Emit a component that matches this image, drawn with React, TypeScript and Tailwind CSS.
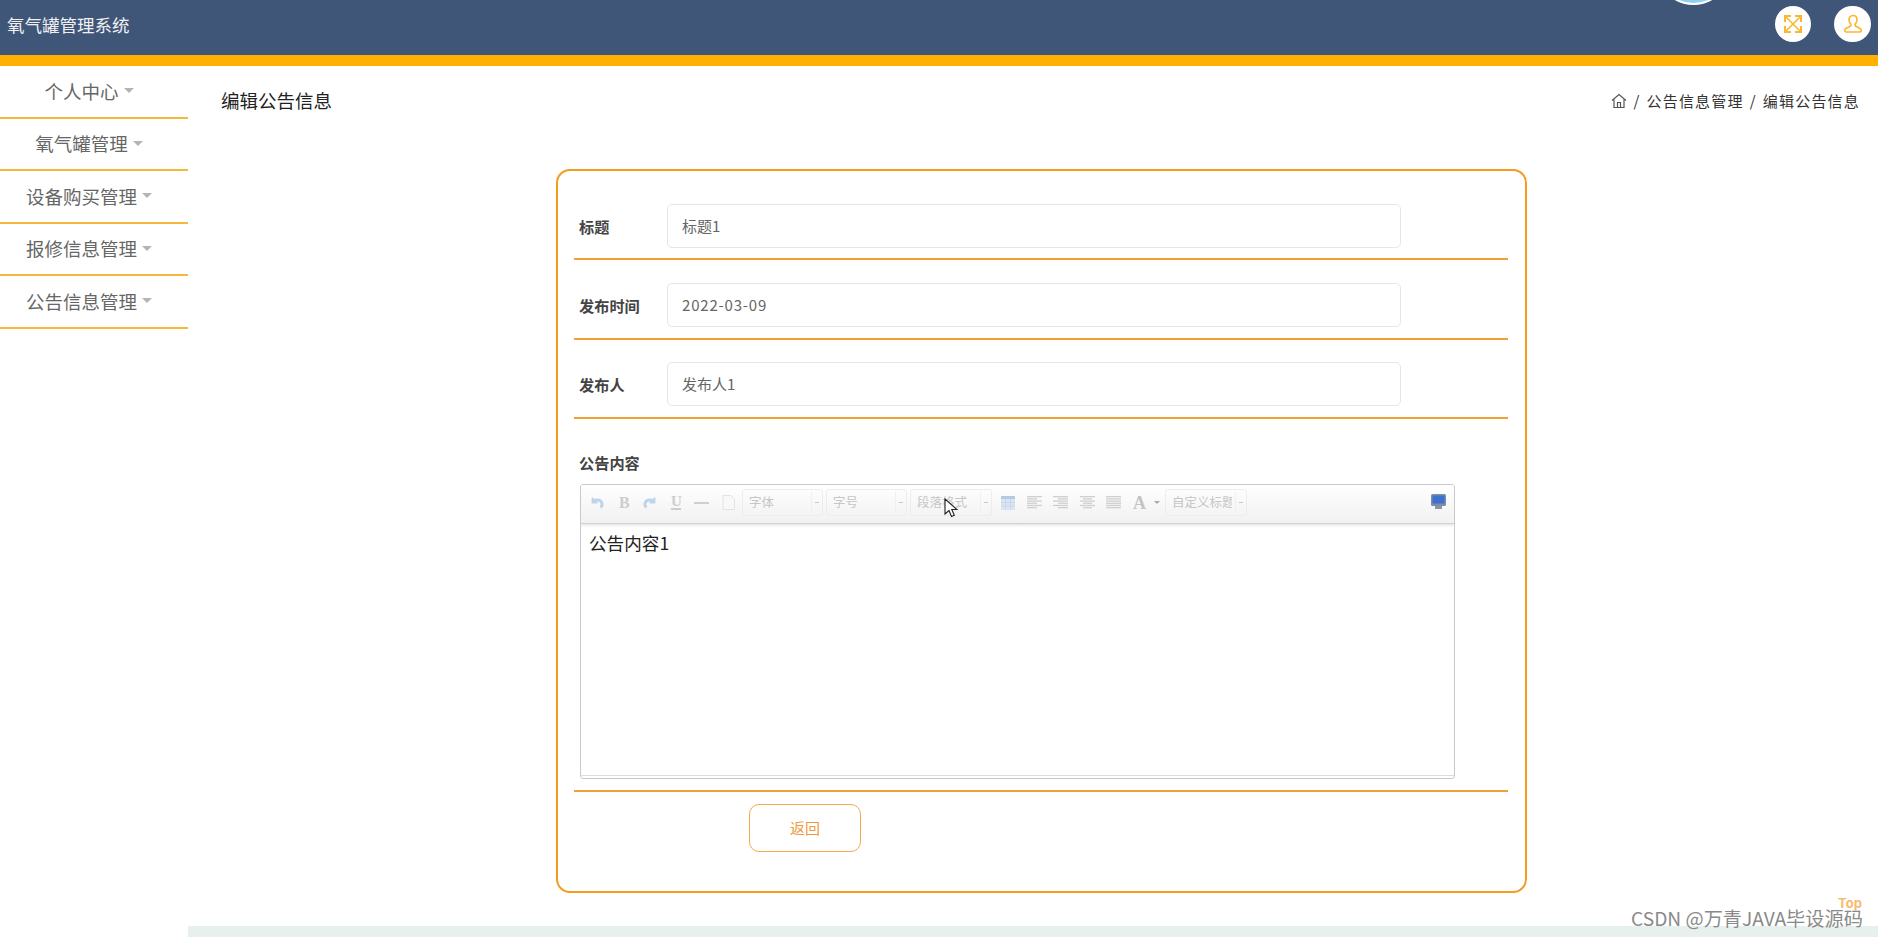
const cjk = { fontFamily: '"Noto Sans CJK SC", "Noto Sans", sans-serif' };

const menuItems = ['个人中心', '氧气罐管理', '设备购买管理', '报修信息管理', '公告信息管理'];

function MenuItem({ label }: { label: string }) {
  return (
    <div className="flex h-[52.5px] items-center justify-center gap-[5px] border-b-2 border-[#f7b73c] pt-[1px] pr-[10px] text-[18.5px] text-[#666666]">
      <span>{label}</span>
      <span className="mb-[2px] h-0 w-0 border-x-[5px] border-t-[5px] border-x-transparent border-t-[#b4b4b4]" />
    </div>
  );
}

function FieldRow({ label, value, pb, mt, valueClass = '' }: { label: string; value: string; pb: string; mt: string; valueClass?: string }) {
  return (
    <div className={`flex items-start border-b-2 border-[#f2a033] pl-[5px] ${pb} ${mt}`}>
      <label className="flex h-[44px] w-[88px] items-center text-[15.2px] font-bold text-[#444444]">{label}</label>
      <div className={`flex h-[44px] w-[734px] items-center rounded-[5px] border border-[#e3e6ea] bg-white px-[14px] text-[15px] text-[#666666] ${valueClass}`}>
        {value}
      </div>
    </div>
  );
}

function ToolSelect({ label, width, ml }: { label: string; width: string; ml: string }) {
  return (
    <div className={`flex h-[27px] items-center rounded-[3px] border border-[#ededed] ${width} ${ml}`}>
      <div className="mr-[3px] min-w-0 flex-1 overflow-hidden pl-[6px] text-[12.5px] whitespace-nowrap text-[#c6c6c6]">{label}</div>
      <div className="flex h-[21px] w-[11px] items-center justify-center border-l border-[#f0f0f0]">
        <span className="h-px w-[4px] bg-[#c8c8c8]" />
      </div>
    </div>
  );
}

function AlignIcon({ ml, rows }: { ml: string; rows: [number, number][] }) {
  return (
    <svg className={`${ml} shrink-0`} width="15" height="13" viewBox="0 0 15 13">
      {rows.map(([x, w], i) => (
        <rect key={i} x={x} y={i * 2.2} width={w} height="1.3" fill="#cfcfcf" />
      ))}
    </svg>
  );
}

function Toolbar() {
  return (
    <div className="flex h-[39px] items-center border-b border-[#d2d2d2] bg-gradient-to-b from-white to-[#f1f1f1] pr-[8px] pb-[3px] pl-[10px] shadow-[0_1px_3px_rgba(0,0,0,0.15)]">
      <svg className="shrink-0" width="13" height="13" viewBox="0 0 13 13" fill="none" stroke="#bcd5ec" strokeWidth="3">
        <path d="M2 5.5c3-2.6 8-2 9 2 .4 1.8-.4 3-1.5 4" />
        <path d="M1.5 1.5v5h5" strokeWidth="1.8" fill="#bcd5ec" />
      </svg>
      <span className="ml-[15px] w-[10px] text-[16px] leading-none font-bold text-[#cdcdcd]" style={{ fontFamily: '"Liberation Serif", serif' }}>B</span>
      <svg className="ml-[14px] shrink-0" width="13" height="13" viewBox="0 0 13 13" fill="none" stroke="#bcd5ec" strokeWidth="3">
        <path d="M11 5.5c-3-2.6-8-2-9 2-.4 1.8.4 3 1.5 4" />
        <path d="M11.5 1.5v5h-5" strokeWidth="1.8" fill="#bcd5ec" />
      </svg>
      <span className="ml-[15px] w-[10px] border-b-2 border-[#cdcdcd] text-[15px] leading-[13px] font-bold text-[#cdcdcd]" style={{ fontFamily: '"Liberation Serif", serif' }}>U</span>
      <span className="ml-[13px] h-[2px] w-[15px] shrink-0 bg-[#cfcfcf]" />
      <svg className="ml-[13px] shrink-0" width="13" height="15" viewBox="0 0 13 15" fill="#f8f8f8" stroke="#e2e2e2">
        <path d="M1 .5h8l3.5 3.5v10.5H1z" />
      </svg>
      <ToolSelect label="字体" width="w-[81px]" ml="ml-[7px]" />
      <ToolSelect label="字号" width="w-[81px]" ml="ml-[3px]" />
      <ToolSelect label="段落格式" width="w-[82px]" ml="ml-[3px]" />
      <svg className="ml-[9px] shrink-0" width="14" height="14" viewBox="0 0 14 14">
        <rect width="14" height="14" fill="#dbe6f4" />
        <rect width="14" height="3" fill="#b4cbe6" />
        <path d="M0 6.5h14M0 10h14M4.5 3v11M9.5 3v11" stroke="#c3d2e6" strokeWidth="0.8" />
      </svg>
      <AlignIcon ml="ml-[12px]" rows={[[0, 15], [0, 10], [0, 15], [0, 10], [0, 15], [0, 10]]} />
      <AlignIcon ml="ml-[11px]" rows={[[0, 15], [5, 10], [0, 15], [5, 10], [0, 15], [5, 10]]} />
      <AlignIcon ml="ml-[12px]" rows={[[0, 15], [3, 9], [0, 15], [3, 9], [0, 15], [3, 9]]} />
      <AlignIcon ml="ml-[11px]" rows={[[0, 15], [0, 15], [0, 15], [0, 15], [0, 15], [0, 15]]} />
      <span className="ml-[12px] w-[14px] text-[18px] leading-none font-bold text-[#c4c4c4]" style={{ fontFamily: '"Liberation Serif", serif' }}>A</span>
      <span className="ml-[7px] h-0 w-0 border-x-[3px] border-t-[3px] border-x-transparent border-t-[#aaaaaa]" />
      <ToolSelect label="自定义标题" width="w-[82px]" ml="ml-[5px]" />
      <svg className="mb-[2px] ml-auto shrink-0" width="15" height="15" viewBox="0 0 15 15">
        <rect width="15" height="12" rx="1.5" fill="#7d8fa8" />
        <rect x="1.5" y="1.5" width="12" height="8" fill="#3f6fd0" />
        <rect x="4" y="12" width="7" height="3" fill="#8a96a8" />
      </svg>
    </div>
  );
}

export default function App() {
  return (
    <div className="relative flex h-[937px] flex-col overflow-hidden bg-white" style={cjk}>
      {/* Header */}
      <header className="flex h-[66px] shrink-0 items-start justify-between overflow-hidden border-b-[11px] border-[#ffb000] bg-[#3f5679] pr-[7px] pl-[7px]">
        <div className="mt-[12px] text-[17.5px] leading-[26px] text-[#f0f0f0]">氧气罐管理系统</div>
        <div className="flex items-start">
          <div className="-mt-[70px] h-[75px] w-[75px] rounded-full border-2 border-white bg-[#8fd0f4]" />
          <div className="mt-[6px] ml-[44px] flex h-[36px] w-[36px] items-center justify-center rounded-full bg-white">
            <svg width="20" height="20" viewBox="0 0 20 20" fill="none" stroke="#fbb72f" strokeWidth="2">
              <path d="M3 3l14 14M17 3L3 17" strokeWidth="1.6" />
              <path d="M2 8V2h6M12 2h6v6M18 12v6h-6M8 18H2v-6" />
            </svg>
          </div>
          <div className="mt-[6px] ml-[23px] flex h-[36px] w-[37px] items-center justify-center rounded-full bg-white">
            <svg width="20" height="20" viewBox="0 0 20 20" fill="none" stroke="#fbb72f" strokeWidth="1.7" strokeLinejoin="round">
              <path d="M10 1.500c-2.600 0-4 2-4 4.200 0 2 .9 3.300 1.700 4.300.6.800 0 2-1 2.500l-3.400 1.700c-1.200.6-1.600 1.500-1.600 2.300 0 1 .7 1.500 1.600 1.500h13.400c.9 0 1.600-.5 1.600-1.500 0-.8-.4-1.700-1.600-2.300L13.300 12.500c-1-.5-1.600-1.700-1-2.500.8-1 1.700-2.300 1.700-4.300 0-2.200-1.400-4.200-4-4.200z" />
            </svg>
          </div>
        </div>
      </header>

      <div className="flex min-h-0 flex-1">
        {/* Sidebar */}
        <aside className="w-[188px] shrink-0 bg-white">
          {menuItems.map((item) => (
            <MenuItem key={item} label={item} />
          ))}
        </aside>

        {/* Main */}
        <main className="flex min-w-0 flex-1 flex-col">
          <div className="flex h-[70px] shrink-0 items-center justify-between pr-[18px] pl-[33px]">
            <h1 className="text-[18.5px] font-normal text-[#222222]">编辑公告信息</h1>
            <div className="flex items-center gap-[6px] text-[15px] tracking-[1.2px] text-[#333333]">
              <svg width="16" height="16" viewBox="0 0 16 16" fill="none" stroke="#555555" strokeWidth="1.2">
                <path d="M1 7.5 8 1.500l7 6M3 6.500v8h10v-8M6.500 14.500v-5h3v5" />
              </svg>
              <span>/</span>
              <span>公告信息管理</span>
              <span>/</span>
              <span>编辑公告信息</span>
            </div>
          </div>

          {/* Form card */}
          <div className="mt-[33px] ml-[368px] w-[971px] rounded-[14px] border-2 border-[#f39c1f] bg-white pt-[33px] pr-[17px] pb-[39px] pl-[16px]">
            <FieldRow label="标题" value="标题1" pb="pb-[10px]" mt="" />
            <FieldRow label="发布时间" value="2022-03-09" pb="pb-[11px]" mt="mt-[23px]" valueClass="tracking-[0.8px]" />
            <FieldRow label="发布人" value="发布人1" pb="pb-[11px]" mt="mt-[22px]" />

            <div className="border-b-2 border-[#f2a033] pb-[11px] pl-[6px]">
              <label className="mt-[33px] -ml-px block text-[15.2px] leading-[20px] font-bold text-[#444444]">公告内容</label>
              <div className="mt-[12px] h-[295px] w-[875px] overflow-hidden rounded-[3px] border border-[#c9c9c9] bg-white">
                <Toolbar />
                <div className="h-[252px] border-b border-[#dddddd] px-[8px] pt-[6px] text-[17.6px] leading-[26px] text-[#222222]">公告内容1</div>
              </div>
            </div>

            <button className="mt-[12px] ml-[175px] flex h-[48px] w-[112px] items-center justify-center rounded-[10px] border border-[#f2a950] bg-white text-[15px] text-[#f09a3e]">
              返回
            </button>
          </div>

          <div className="mt-auto h-[11px] shrink-0 bg-[#e7f0ec]" />
        </main>
      </div>

      {/* Mouse pointer */}
      <svg className="absolute top-[498px] left-[944px]" width="14" height="21" viewBox="0 0 14 21" fill="#ffffff" stroke="#222222" strokeWidth="1.1">
        <path d="M1 1v15l4-3.500 2.500 6 2.800-1.200-2.500-5.800H13z" />
      </svg>

      {/* Back to top */}
      <div className="absolute top-[895px] left-[1838px] text-[13px] leading-[16px] font-bold text-[#f6bb72]" style={{ fontFamily: 'Inter, sans-serif' }}>Top</div>

      {/* Watermark */}
      <div className="absolute top-[905px] left-[1631px] text-[19.2px] leading-[26px] whitespace-nowrap text-[#8a8a8a]">CSDN @万青JAVA毕设源码</div>
    </div>
  );
}
